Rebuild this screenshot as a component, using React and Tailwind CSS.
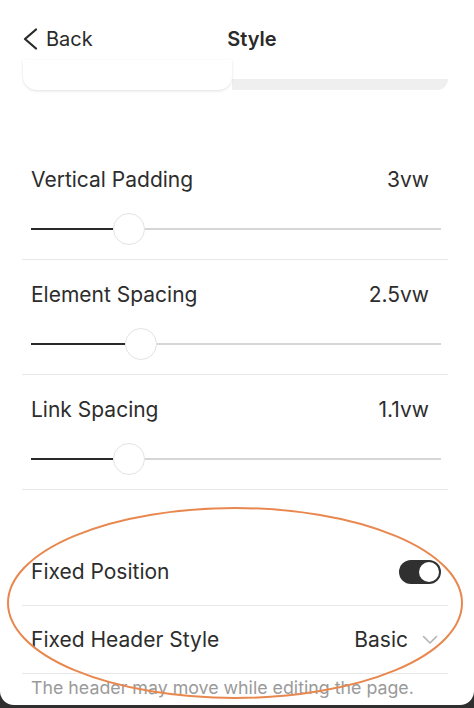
import React from "react";

function Slider({ label, value, pos }) {
  return (
    <div className="pt-[21px] pb-[14px] border-b border-[#e8e8e8]">
      <div className="flex items-center justify-between pl-[9px] pr-[19px] h-[28px]">
        <span className="text-[21px] text-[#2d2d2d]">{label}</span>
        <span className="text-[21px] text-[#2d2d2d]">{value}</span>
      </div>
      <div className="mt-[19px] h-[32px] flex items-center pl-[9px] pr-[7px]">
        <div className="flex items-center w-full">
          <div className="h-[2px] bg-[#2a2a2a]" style={{ width: pos - 16 }} />
          <div className="w-[32px] h-[32px] rounded-full bg-white border-[1.5px] border-[#e3e3e3] shrink-0" />
          <div className="h-[1.5px] bg-[#d6d6d6] flex-1" />
        </div>
      </div>
    </div>
  );
}

export default function App() {
  return (
    <div
      className="relative w-[474px] h-[708px] overflow-hidden bg-[#2f2f2f]"
      style={{ fontFamily: "Inter, 'Liberation Sans', sans-serif" }}
    >
      <div className="h-[705px] bg-white rounded-b-[14px] overflow-hidden flex flex-col">
        <div className="h-[60px] flex items-center relative px-[22px] pt-[18px]">
          <div className="flex items-center gap-[8px]">
            <svg width="16" height="24" viewBox="0 0 16 24" fill="none">
              <path d="M14 2.5 L3 12 L14 21.5" stroke="#2a2a2a" strokeWidth="2.3" strokeLinecap="round" strokeLinejoin="round" />
            </svg>
            <span className="text-[20px] text-[#2a2a2a]">Back</span>
          </div>
          <span className="absolute left-0 right-0 text-center text-[20px] font-semibold text-[#2a2a2a] pointer-events-none pl-[30px]">
            Style
          </span>
        </div>
        <div className="h-[30px] pl-[23px] pr-[26px] flex items-end">
          <div className="w-[209px] h-[30px] bg-white rounded-b-[14px] shadow-[0_1px_3px_rgba(0,0,0,0.12)] relative z-10" />
          <div className="flex-1 h-[11px] bg-[#efefef] rounded-br-[14px]" />
        </div>
        <div className="pl-[22px] pr-[26px] mt-[55px]">
          <Slider label="Vertical Padding" value="3vw" pos={98} />
          <Slider label="Element Spacing" value="2.5vw" pos={110} />
          <Slider label="Link Spacing" value="1.1vw" pos={98} />
          <div className="h-[116px] flex items-end pb-[19px] border-b border-[#e8e8e8]">
            <div className="h-[28px] w-full flex items-center justify-between pl-[9px] pr-[7px]">
              <span className="text-[21px] text-[#2d2d2d]">Fixed Position</span>
              <div className="w-[42px] h-[24px] rounded-full bg-[#303030] flex items-center justify-end pr-[2px]">
                <div className="w-[20px] h-[20px] rounded-full bg-white" />
              </div>
            </div>
          </div>
          <div className="h-[68px] flex items-center justify-between pl-[9px] pr-[10px] border-b border-[#e8e8e8]">
            <span className="text-[21px] text-[#2d2d2d]">Fixed Header Style</span>
            <div className="flex items-center gap-[14px]">
              <span className="text-[21px] text-[#2d2d2d]">Basic</span>
              <svg width="16" height="10" viewBox="0 0 16 10" fill="none">
                <path d="M1.5 1.5 L8 8 L14.5 1.5" stroke="#b3b3b3" strokeWidth="1.6" strokeLinecap="round" strokeLinejoin="round" />
              </svg>
            </div>
          </div>
          <div className="pl-[9px] h-[28px] flex items-center">
            <span className="text-[17.8px] text-[#9a9a9a]">The header may move while editing the page.</span>
          </div>
        </div>
      </div>
      <svg className="absolute left-0 top-0 pointer-events-none" width="474" height="708" viewBox="0 0 474 708">
        <ellipse cx="235" cy="603" rx="227" ry="95" fill="none" stroke="#e8874e" strokeWidth="2" />
      </svg>
    </div>
  );
}
